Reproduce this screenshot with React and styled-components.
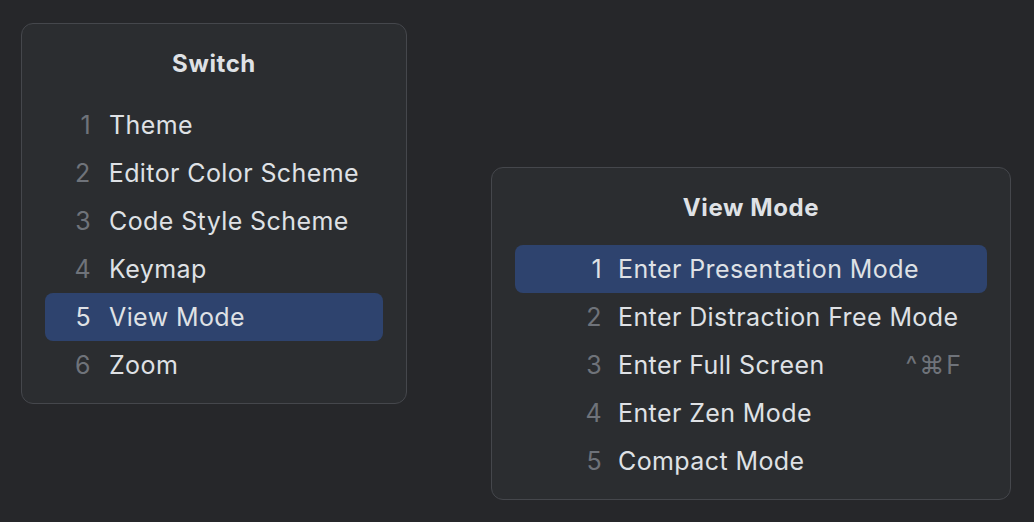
import React from 'react';
import styled, { createGlobalStyle } from 'styled-components';

const GlobalStyle = createGlobalStyle`
  html, body {
    margin: 0;
    padding: 0;
    background: #26272a;
  }
  body {
    font-family: Inter, "Noto Sans", sans-serif;
  }
`;

const Page = styled.div`
  display: flex;
  align-items: flex-start;
  gap: 84px;
  width: 1034px;
  height: 522px;
  box-sizing: border-box;
  padding: 23px 0 0 21px;
  overflow: hidden;
`;

const Popup = styled.div`
  width: ${(p) => p.width}px;
  margin-top: ${(p) => p.offset || 0}px;
  box-sizing: border-box;
  background: #2b2d30;
  border: 1.5px solid #45474c;
  border-radius: 12px;
  padding: 0 23px 14px;
`;

const Title = styled.div`
  height: 77px;
  display: flex;
  align-items: center;
  justify-content: center;
  padding-top: 2px;
  box-sizing: border-box;
  color: #dfe1e5;
  font-size: 24px;
  font-weight: 700;
  letter-spacing: 0.6px;
`;

const Row = styled.div`
  display: flex;
  align-items: center;
  height: 48px;
  padding: 0 24px 0 ${(p) => p.indent}px;
  border-radius: 8px;
  background: ${(p) => (p.selected ? '#2e436e' : 'transparent')};
  color: #dfe1e5;
  font-size: 25px;
  letter-spacing: 0.4px;
  white-space: nowrap;
`;

const Num = styled.span`
  width: 20px;
  margin-right: ${(p) => p.gap}px;
  text-align: right;
  color: ${(p) => (p.selected ? '#dfe1e5' : '#6f737a')};
`;

const Label = styled.span`
  flex: 1;
`;

const Shortcut = styled.span`
  color: #6f737a;
  font-size: 25px;
  letter-spacing: 2px;
`;

const switchItems = ['Theme', 'Editor Color Scheme', 'Code Style Scheme', 'Keymap', 'View Mode', 'Zoom'];

const viewItems = [
  { label: 'Enter Presentation Mode' },
  { label: 'Enter Distraction Free Mode' },
  { label: 'Enter Full Screen', shortcut: '^⌘F' },
  { label: 'Enter Zen Mode' },
  { label: 'Compact Mode' },
];

export default function App() {
  return (
    <>
      <GlobalStyle />
      <Page>
        <Popup width={386}>
          <Title>Switch</Title>
          {switchItems.map((label, i) => (
            <Row key={label} indent={26} selected={i === 4}>
              <Num gap={18} selected={i === 4}>{i + 1}</Num>
              <Label>{label}</Label>
            </Row>
          ))}
        </Popup>
        <Popup width={520} offset={144}>
          <Title>View Mode</Title>
          {viewItems.map((item, i) => (
            <Row key={item.label} indent={67} selected={i === 0}>
              <Num gap={16} selected={i === 0}>{i + 1}</Num>
              <Label>{item.label}</Label>
              {item.shortcut && <Shortcut>{item.shortcut}</Shortcut>}
            </Row>
          ))}
        </Popup>
      </Page>
    </>
  );
}
